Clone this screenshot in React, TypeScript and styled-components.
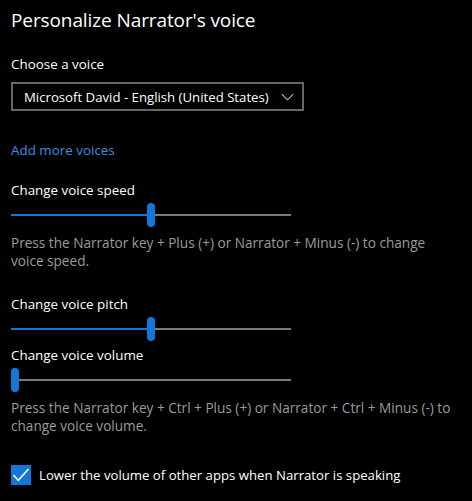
import React from 'react';
import styled, { createGlobalStyle } from 'styled-components';

const GlobalStyle = createGlobalStyle`
  html, body {
    margin: 0;
    background: #000;
  }
  body {
    font-family: 'Open Sans', 'Noto Sans', sans-serif;
    color: #fff;
  }
`;

const Page = styled.div`
  width: 472px;
  height: 501px;
  padding: 7px 11px 0 11px;
  box-sizing: border-box;
  background: #000;
  display: flex;
  flex-direction: column;
  overflow: hidden;
`;

const Title = styled.h1`
  margin: 0;
  font-size: 19px;
  font-weight: 400;
  line-height: 26px;
  color: #fff;
  letter-spacing: -0.1px;
`;

const Label = styled.div<{ mt: number }>`
  margin-top: ${(p) => p.mt}px;
  font-size: 13.4px;
  line-height: 18px;
  color: #fff;
`;

const Select = styled.div`
  margin-top: 9px;
  width: 293px;
  height: 29px;
  box-sizing: border-box;
  border: 2px solid #666;
  display: flex;
  align-items: center;
  justify-content: space-between;
  padding: 0 8px 0 11px;
  font-size: 13.2px;
  line-height: 18px;
  color: #fff;
`;

const Link = styled.a`
  margin-top: 30px;
  font-size: 13.4px;
  line-height: 18px;
  color: #3b8fe0;
  text-decoration: none;
`;

const SliderWrap = styled.div<{ mt: number }>`
  margin-top: ${(p) => p.mt}px;
  position: relative;
  width: 280px;
  height: 24px;
`;

const Track = styled.div`
  position: absolute;
  left: 0;
  right: 0;
  top: 11px;
  height: 2px;
  background: #7a7a7a;
`;

const Fill = styled.div`
  position: absolute;
  left: 0;
  top: 0;
  height: 2px;
  background: #1277d6;
`;

const Thumb = styled.div`
  position: absolute;
  top: 0;
  width: 8px;
  height: 24px;
  border-radius: 4px;
  background: #1277d6;
`;

const Hint = styled.p<{ mt: number }>`
  margin: ${(p) => p.mt}px 0 0 0;
  max-width: 445px;
  font-size: 13.6px;
  line-height: 18px;
  color: #9b9b9b;
`;

const CheckRow = styled.label`
  margin-top: 30px;
  display: flex;
  align-items: center;
  gap: 8px;
  font-size: 13.2px;
  line-height: 18px;
  color: #fff;
`;

const Box = styled.span`
  width: 20px;
  height: 20px;
  flex: none;
  background: #1277d6;
  display: flex;
`;

const Slider = ({ value, mt }: { value: number; mt: number }) => {
  const left = (272 * value) / 100;
  return (
    <SliderWrap mt={mt}>
      <Track>
        <Fill style={{ width: left + 4 }} />
      </Track>
      <Thumb style={{ left }} />
    </SliderWrap>
  );
};

export default function App() {
  return (
    <>
      <GlobalStyle />
      <Page>
        <Title>Personalize Narrator's voice</Title>
        <Label mt={22}>Choose a voice</Label>
        <Select>
          <span>Microsoft David - English (United States)</span>
          <svg width="13" height="8" viewBox="0 0 13 8">
            <path d="M0.8 1.2 L6.5 6.8 L12.2 1.2" fill="none" stroke="#bbb" strokeWidth="1.1" />
          </svg>
        </Select>
        <Link>Add more voices</Link>
        <Label mt={22}>Change voice speed</Label>
        <Slider value={50} mt={4} />
        <Hint mt={7}>
          Press the Narrator key + Plus (+) or Narrator + Minus (-) to change voice speed.
        </Hint>
        <Label mt={25}>Change voice pitch</Label>
        <Slider value={50} mt={4} />
        <Label mt={5}>Change voice volume</Label>
        <Slider value={0} mt={4} />
        <Hint mt={7}>
          Press the Narrator key + Ctrl + Plus (+) or Narrator + Ctrl + Minus (-) to change
          voice volume.
        </Hint>
        <CheckRow>
          <Box>
            <svg width="20" height="20" viewBox="0 0 20 20">
              <path d="M2.5 10 L7.3 15.3 L17.5 4" fill="none" stroke="#fff" strokeWidth="1.5" />
            </svg>
          </Box>
          Lower the volume of other apps when Narrator is speaking
        </CheckRow>
      </Page>
    </>
  );
}
